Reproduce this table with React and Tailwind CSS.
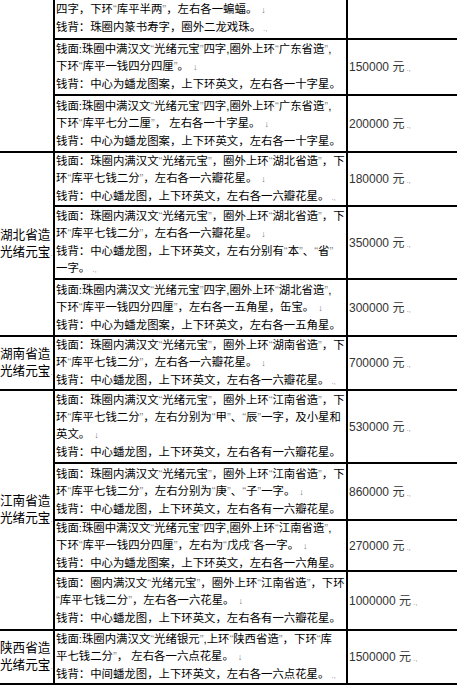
import React from 'react'

// “ ” quotes come out small and grey, ↓ is the word line-break mark, | is the cell-end mark
function Txt({ s }) {
  return s.split(/([“”↓|])/).map((p, i) => {
    if (p === '“' || p === '”') return <span key={i} className="text-[#8a8a8a]">{p}</span>
    if (p === '↓') return <span key={i} className="ml-[4px] text-[9px] text-[#777]">↓</span>
    if (p === '|') return <span key={i} className="ml-[2px] text-[8px] text-[#999]">.,</span>
    return p
  })
}

const groups = [
  {
    label: null,
    rows: [
      {
        h: 'h-[40px] border-b-2 border-black',
        align: 'justify-end pb-[1px]',
        lines: ['四字，下环“库平半两”，左右各一蝙蝠。↓', '钱背：珠圈内篆书寿字，圈外二龙戏珠。|'],
        price: '',
      },
      {
        h: 'h-[56px] border-b-2 border-black',
        lines: ['钱面:珠圈中满汉文“光绪元宝”四字,圈外上环“广东省造”,', '下环“库平一钱四分四厘”。↓', '钱背：中心为蟠龙图案，上下环英文，左右各一十字星。'],
        price: '150000 元',
      },
      {
        h: 'h-[55px]',
        lines: ['钱面:珠圈中满汉文“光绪元宝”四字,圈外上环“广东省造”,', '下环“库平七分二厘”， 左右各一十字星。↓', '钱背：中心为蟠龙图案，上下环英文，左右各一十字星。'],
        price: '200000 元',
      },
    ],
  },
  {
    label: ['湖北省造', '光绪元宝'],
    rows: [
      {
        h: 'h-[54px] border-b-2 border-black',
        lines: ['钱面：珠圈内满汉文“光绪元宝”，圈外上环“湖北省造”，下', '环“库平七钱二分”，左右各一六瓣花星。↓', '钱背：中心蟠龙图，上下环英文，左右各一六瓣花星。|'],
        price: '180000 元',
      },
      {
        h: 'h-[73px] border-b-2 border-black',
        lines: ['钱面：珠圈内满汉文“光绪元宝”，圈外上环“湖北省造”，下', '环“库平七钱二分”，左右各一六瓣花星。↓', '钱背：中心蟠龙图，上下环英文，左右分别有“本”、“省”', '一字。|'],
        price: '350000 元',
      },
      {
        h: 'h-[55px]',
        lines: ['钱面:珠圈内满汉文“光绪元宝”四字,圈外上环“湖北省造”,', '下环“库平一钱四分四厘”，左右各一五角星，缶宝。↓', '钱背：中心为蟠龙图案，上下环英文，左右各一五角星。'],
        price: '300000 元',
      },
    ],
  },
  {
    label: ['湖南省造', '光绪元宝'],
    rows: [
      {
        h: 'h-[52px]',
        lines: ['钱面：珠圈内满汉文“光绪元宝”，圈外上环“湖南省造”，下', '环“库平七钱二分”，左右各一六瓣花星。↓', '钱背：中心蟠龙图，上下环英文，左右各一六瓣花星。|'],
        price: '700000 元',
      },
    ],
  },
  {
    label: ['江南省造', '光绪元宝'],
    rows: [
      {
        h: 'h-[73px] border-b-2 border-black',
        lines: ['钱面：珠圈内满汉文“光绪元宝”，圈外上环“江南省造”，下', '环“库平七钱二分”，左右分别为“甲”、“辰”一字，及小星和', '英文。↓', '钱背：中心蟠龙图，上下环英文，左右各有一六瓣花星。'],
        price: '530000 元',
      },
      {
        h: 'h-[57px] border-b-2 border-black',
        lines: ['钱面：珠圈内满汉文“光绪元宝”，圈外上环“江南省造”，下', '环“库平七钱二分”，左右分别为“庚”、“子”一字。↓', '钱背：中心蟠龙图，上下环英文，左右各有一六瓣花星。'],
        price: '860000 元',
      },
      {
        h: 'h-[51px] border-b-2 border-black',
        lines: ['钱面:珠圈中满汉文“光绪元宝”四字,圈外上环“江南省造”,', '下环“库平一钱四分四厘”，左右为“戊戌”各一字。↓', '钱背：中心为蟠龙图案，上下环英文，左右各一六角星。'],
        price: '270000 元',
      },
      {
        h: 'h-[57px]',
        lines: ['钱面：圈内满汉文“光绪元宝”，圈外上环“江南省造”，下环', '“库平七钱二分”，左右各一六花星。↓', '钱背：中心蟠龙图，上下环英文，左右各有一六瓣花星。'],
        price: '1000000 元',
      },
    ],
  },
  {
    label: ['陕西省造', '光绪元宝'],
    rows: [
      {
        h: 'h-[52px]',
        lines: ['钱面:珠圈内满汉文“光绪银元”,上环“陕西省造”，下环“库', '平七钱二分”， 左右各一六点花星。↓', '钱背：中间蟠龙图，上下环英文，左右各一六点花星。|'],
        price: '1500000 元',
      },
    ],
  },
]

export default function App() {
  return (
    <div className="w-[457px] h-[686px] overflow-hidden bg-white text-black font-['Liberation_Sans','Noto_Sans_CJK_SC',sans-serif]">
      {groups.map((g, gi) => (
        <div key={gi} className="flex border-b-2 border-black">
          {/* province column */}
          <div className="w-[55px] shrink-0 border-r-2 border-black flex flex-col justify-center overflow-hidden whitespace-nowrap text-[12.6px] leading-[17px]">
            {g.label && (
              <>
                <div>{g.label[0]}</div>
                <div>
                  {g.label[1]}
                  <span className="text-[8px] text-[#999]">.</span>
                </div>
              </>
            )}
          </div>

          <div className="flex-1 flex flex-col">
            {g.rows.map((r, ri) => (
              <div key={ri} className={`flex ${r.h}`}>
                <div className={`w-[293px] shrink-0 border-r-2 border-black flex flex-col overflow-hidden whitespace-nowrap pl-[1px] text-[11.4px] leading-[17px] ${r.align || 'justify-center'}`}>
                  {r.lines.map((l, li) => (
                    <div key={li}>
                      <Txt s={l} />
                    </div>
                  ))}
                </div>
                <div className="flex-1 flex items-center pl-[1px] text-[12px] text-[#333]">
                  {r.price && (
                    <span>
                      {r.price}
                      <span className="ml-[2px] text-[8px] text-[#999]">.,</span>
                    </span>
                  )}
                </div>
              </div>
            ))}
          </div>
        </div>
      ))}
    </div>
  )
}
